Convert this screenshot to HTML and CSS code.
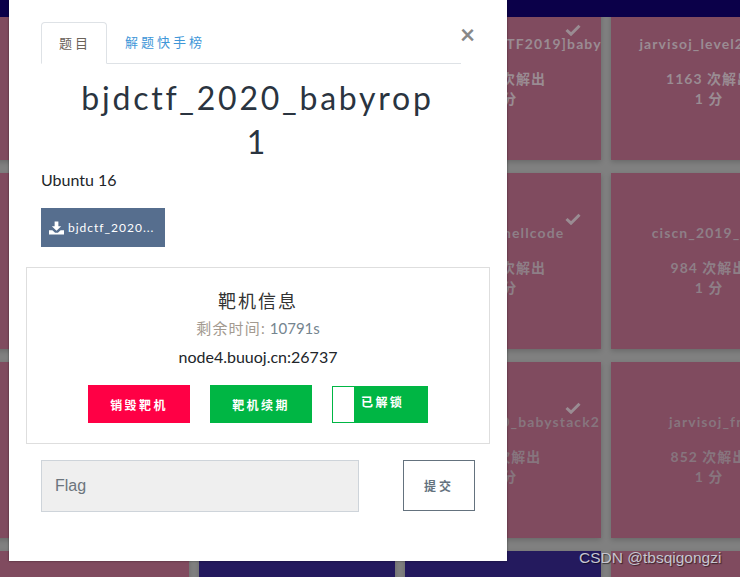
FILE: index.html
```html
<!DOCTYPE html>
<html lang="zh-CN">
  <head>
    <meta charset="UTF-8" />
    <meta name="viewport" content="width=device-width, initial-scale=1.0" />
    <title>bjdctf_2020_babyrop1</title>
    <link rel="stylesheet" href="styles.css">
  </head>
  <body>
    <div class="navbar"></div>

    <div class="page">
      <div class="challenge-grid">
        <div class="card"><div class="card-name">ciscn_2019_c_1</div><div class="card-meta">2310 次解出</div><div class="card-meta">1 分</div></div>
        <div class="card"><div class="card-name">babyrop</div><div class="card-meta">1620 次解出</div><div class="card-meta">1 分</div></div>
        <div class="card">
          <svg class="check" viewBox="0 0 16 12"><path d="M1.5 6 6 10.2 14.5 1.8" /></svg>
          <div class="card-name">[HarekazeCTF2019]baby_rop</div><div class="card-meta">1381 次解出</div><div class="card-meta">1 分</div>
        </div>
        <div class="card"><div class="card-name">jarvisoj_level2_x64</div><div class="card-meta">1163 次解出</div><div class="card-meta">1 分</div></div>

        <div class="card"><div class="card-name">pwn1_sctf_2016</div><div class="card-meta">1500 次解出</div><div class="card-meta">1 分</div></div>
        <div class="card"><div class="card-name">get_started</div><div class="card-meta">1200 次解出</div><div class="card-meta">1 分</div></div>
        <div class="card">
          <svg class="check" viewBox="0 0 16 12"><path d="M1.5 6 6 10.2 14.5 1.8" /></svg>
          <div class="card-name">others_shellcode</div><div class="card-meta">1050 次解出</div><div class="card-meta">1 分</div>
        </div>
        <div class="card"><div class="card-name">ciscn_2019_n_5</div><div class="card-meta">984 次解出</div><div class="card-meta">1 分</div></div>

        <div class="card"><div class="card-name">ciscn_2019_en_2</div><div class="card-meta">900 次解出</div><div class="card-meta">1 分</div></div>
        <div class="card"><div class="card-name">ciscn_2019_ne_5</div><div class="card-meta">880 次解出</div><div class="card-meta">1 分</div></div>
        <div class="card">
          <svg class="check" viewBox="0 0 16 12"><path d="M1.5 6 6 10.2 14.5 1.8" /></svg>
          <div class="card-name">bjdctf_2020_babystack2</div><div class="card-meta">860 次解出</div><div class="card-meta">1 分</div>
        </div>
        <div class="card"><div class="card-name">jarvisoj_fm</div><div class="card-meta">852 次解出</div><div class="card-meta">1 分</div></div>

        <div class="card"></div>
        <div class="card card-navy"></div>
        <div class="card card-navy"></div>
        <div class="card"></div>
      </div>
    </div>

    <div class="modal">
      <button class="close">&times;</button>

      <div class="tabs">
        <div class="tab active">题目</div>
        <div class="tab">解题快手榜</div>
      </div>

      <h1 class="title">bjdctf_2020_babyrop<br>1</h1>
      <p class="desc">Ubuntu 16</p>

      <a class="btn-download">
        <svg class="download-icon" viewBox="0 0 16 14">
          <path d="M6 0h4v5h3L8 10 3 5h3z" />
          <path d="M0 9.5h3.6L6.5 12h3l2.9-2.5H16V14H0z" />
        </svg>
        <span>bjdctf_2020...</span>
      </a>

      <div class="target-box">
        <div class="target-title">靶机信息</div>
        <div class="target-time"><span class="time-label">剩余时间:</span> 10791s</div>
        <div class="target-host">node4.buuoj.cn:26737</div>
        <div class="target-actions">
          <button class="btn btn-red">销毁靶机</button>
          <button class="btn btn-green">靶机续期</button>
          <button class="btn btn-unlocked"><span class="progress"></span><span class="unlocked-text">已解锁</span></button>
        </div>
      </div>

      <div class="flag-row">
        <input class="flag-input" type="text" placeholder="Flag" />
        <button class="btn-submit">提交</button>
      </div>
    </div>

    <div class="watermark">CSDN @tbsqigongzi</div>
  </body>
</html>
```

FILE: styles.css
```css
body {
  font-family: Lato, "Noto Sans CJK SC", sans-serif;
  margin: 0;
  background: #808080;
}
.page {
  width: 740px;
  height: 577px;
  overflow: hidden;
}
.navbar {
  position: absolute;
  top: 0;
  left: 0;
  width: 740px;
  height: 17px;
  background: #0b0049;
  z-index: 1;
}
.challenge-grid {
  display: grid;
  grid-template-columns: repeat(4, 196px);
  grid-template-rows: 176px 176px 176px 42px;
  column-gap: 10px;
  row-gap: 13px;
  margin-top: -16px;
  margin-left: -7px;
  width: 814px;
}
.card {
  position: relative;
  background: #804b5f;
  box-shadow: 0 2px 5px rgba(0, 0, 0, 0.18);
  padding: 50px 18px 0;
  box-sizing: border-box;
  text-align: center;
  color: #9a8c93;
  font-size: 14px;
  font-weight: 700;
  letter-spacing: 1.1px;
  overflow: hidden;
}
.card:nth-child(n + 5) {
  color: #8e7f87;
}
.card:nth-child(n + 9) {
  color: #87757e;
}
.card-navy {
  background: #241a5e;
}
.card-name {
  white-space: nowrap;
  line-height: 20px;
  margin-bottom: 15px;
}
.card-meta {
  line-height: 20px;
  letter-spacing: 1px;
  white-space: nowrap;
}
.check {
  position: absolute;
  top: 40px;
  left: 160px;
  width: 16px;
  height: 12px;
  fill: none;
  stroke: #9a8c93;
  stroke-width: 3;
}
.modal {
  position: absolute;
  top: 0;
  left: 9px;
  width: 498px;
  height: 561px;
  box-sizing: border-box;
  padding: 22px 32px 0;
  background: #fff;
  box-shadow: 0 0 2px rgba(0, 0, 0, 0.5);
  z-index: 2;
}
.close {
  position: absolute;
  top: 21px;
  left: 451px;
  padding: 0;
  border: none;
  background: none;
  color: #888;
  font-family: Lato, sans-serif;
  font-size: 26px;
  font-weight: 700;
  line-height: 26px;
}
.tabs {
  display: flex;
  width: 420px;
  height: 42px;
  box-sizing: border-box;
  border-bottom: 1px solid #dee2e6;
}
.tab {
  padding: 0 18px;
  line-height: 41px;
  font-size: 13px;
  letter-spacing: 3px;
  white-space: nowrap;
  color: #3f97d8;
}
.tab.active {
  height: 42px;
  box-sizing: border-box;
  width: 66px;
  padding: 0 17px;
  color: #6a6259;
  background: #fff;
  border: 1px solid #dee2e6;
  border-bottom-color: #fff;
  border-radius: 4px 4px 0 0;
}
.title {
  margin: 12px 0 0;
  width: 433px;
  text-align: center;
  font-size: 32px;
  font-weight: 400;
  line-height: 44px;
  letter-spacing: 2.75px;
  color: #2a3440;
}
.desc {
  margin: 5px 0 0;
  font-size: 16px;
  line-height: 22px;
  color: #212529;
}
.btn-download {
  display: flex;
  align-items: center;
  gap: 4px;
  width: 124px;
  height: 39px;
  margin-top: 17px;
  box-sizing: border-box;
  padding-left: 8px;
  background: #566e8e;
  color: #fff;
  font-size: 12px;
  letter-spacing: 1px;
  white-space: nowrap;
}
.download-icon {
  width: 15px;
  height: 14px;
  fill: #fff;
  flex: none;
}
.target-box {
  width: 464px;
  height: 177px;
  margin: 20px 0 0 -15px;
  box-sizing: border-box;
  padding-top: 21px;
  border: 1px solid #dedede;
  text-align: center;
}
.target-title {
  font-size: 18px;
  line-height: 24px;
  letter-spacing: 2px;
  color: #333;
}
.target-time {
  margin-top: 4px;
  font-size: 15px;
  line-height: 22px;
  color: #75858f;
}
.time-label {
  color: #a39a90;
  letter-spacing: 1.2px;
}
.target-host {
  margin-top: 7px;
  font-size: 16px;
  line-height: 22px;
  color: #212529;
}
.target-actions {
  display: flex;
  align-items: flex-end;
  gap: 20px;
  margin: 17px 0 0 61px;
}
.btn {
  height: 38px;
  width: 102px;
  padding: 0;
  border: none;
  color: #fff;
  font-family: Lato, "Noto Sans CJK SC", sans-serif;
  font-size: 12px;
  font-weight: 700;
  letter-spacing: 2.4px;
}
.btn-red {
  background: #ff0045;
}
.btn-green {
  background: #00b644;
}
.btn-unlocked {
  display: flex;
  align-items: stretch;
  width: 96px;
  height: 37px;
  background: #00b644;
  border: 1px solid #00b644;
}
.progress {
  width: 21px;
  background: #fff;
  flex: none;
}
.unlocked-text {
  margin-left: 7px;
  line-height: 32px;
}
.flag-row {
  display: flex;
  align-items: flex-start;
  margin-top: 16px;
}
.flag-input {
  width: 318px;
  height: 52px;
  box-sizing: border-box;
  padding: 0 13px;
  background: #efefef;
  border: 1px solid #ced4da;
  font-family: "Liberation Sans", sans-serif;
  font-size: 16px;
}
.flag-input::placeholder {
  color: #6c757d;
  opacity: 1;
}
.btn-submit {
  width: 72px;
  height: 51px;
  margin-left: 44px;
  padding: 0;
  background: #fff;
  border: 1px solid #64727e;
  color: #64727e;
  font-family: Lato, "Noto Sans CJK SC", sans-serif;
  font-size: 12px;
  font-weight: 700;
  letter-spacing: 3px;
}
.watermark {
  position: absolute;
  top: 548px;
  left: 579px;
  z-index: 3;
  font-family: "Liberation Sans", sans-serif;
  font-size: 15.5px;
  line-height: 20px;
  color: #c6c6d0;
  text-shadow: 1px 1px 1px rgba(0, 0, 0, 0.55);
  white-space: nowrap;
}
```
